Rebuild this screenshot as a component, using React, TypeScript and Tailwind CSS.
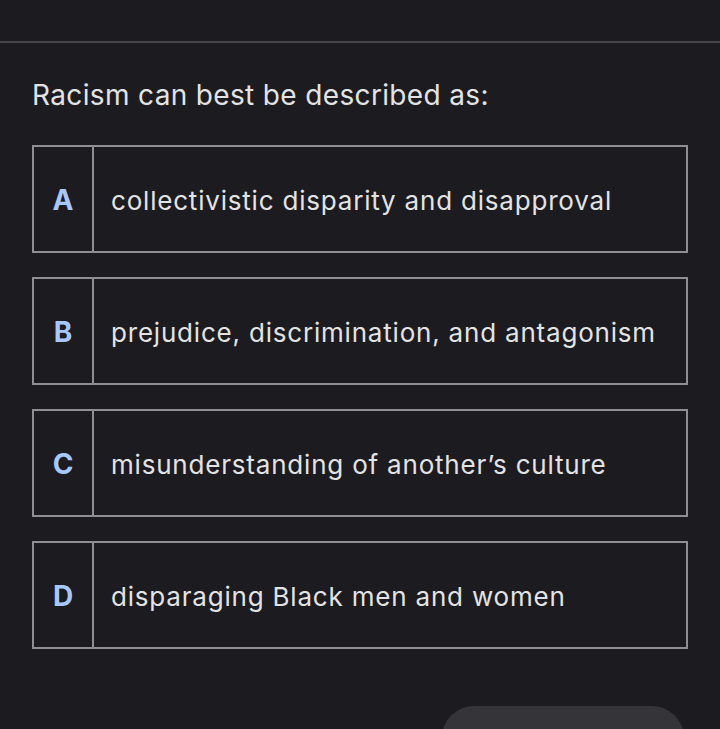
import React from "react";

const options = [
  { letter: "A", text: "collectivistic disparity and disapproval" },
  { letter: "B", text: "prejudice, discrimination, and antagonism" },
  { letter: "C", text: "misunderstanding of another\u2019s culture" },
  { letter: "D", text: "disparaging Black men and women" },
];

export default function App() {
  return (
    <div className="h-[729px] w-[720px] overflow-hidden bg-[#1c1b20] font-['Inter',sans-serif] text-[#e3e3e3]">
      <div className="h-[41px]" />
      <div className="h-[2px] bg-[#47464b]" />

      <div className="px-8 pt-[34px]">
        <p className="text-[28px] leading-[36px] tracking-[0.35px]">
          Racism can best be described as:
        </p>

        <div className="mt-[32px] flex flex-col gap-[24px]">
          {options.map((opt) => (
            <div
              key={opt.letter}
              className="flex h-[108px] border-2 border-[#8e8e93]"
            >
              <div className="flex w-[60px] items-center justify-center border-r-2 border-[#8e8e93] pt-[2px] text-[28px] font-bold text-[#a8c7fa]">
                {opt.letter}
              </div>
              <div className="flex items-center pl-[17px] pt-[2px] text-[26px] tracking-[0.8px]">
                {opt.text}
              </div>
            </div>
          ))}
        </div>

        <div className="mt-[57px] flex justify-end pr-[4px]">
          <div className="h-[64px] w-[242px] rounded-[32px] bg-[#353438]" />
        </div>
      </div>
    </div>
  );
}
